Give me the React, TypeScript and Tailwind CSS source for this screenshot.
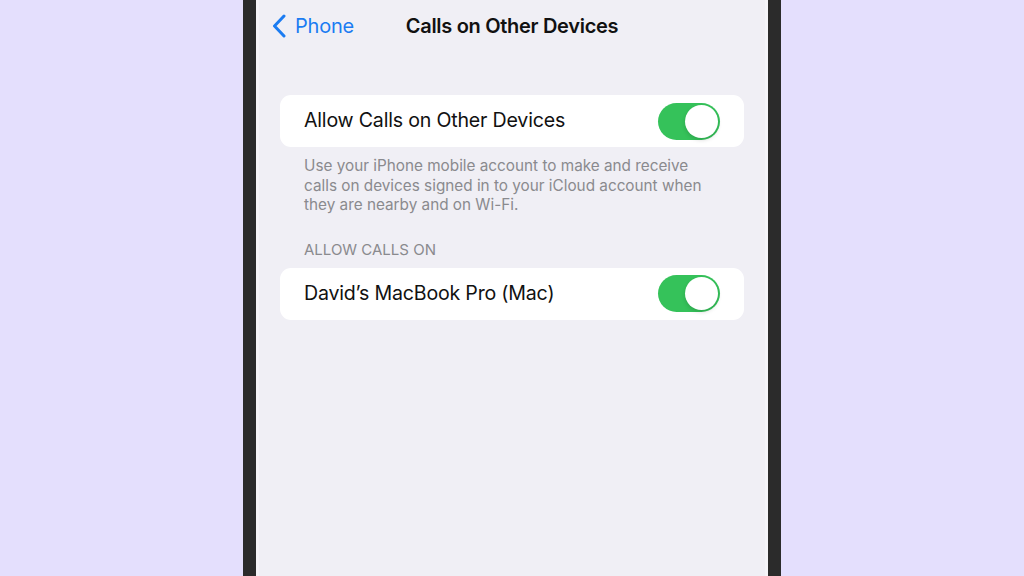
import React from "react";

function Toggle() {
  return (
    <div className="flex h-[37px] w-[62px] items-center justify-end rounded-full bg-[#35c25a] p-[2px]">
      <div className="h-[33px] w-[33px] rounded-full bg-white shadow-[0_2px_4px_rgba(0,0,0,0.15)]" />
    </div>
  );
}

function Row({ label }: { label: string }) {
  return (
    <div className="flex h-[52px] items-center justify-between rounded-[11px] bg-white pl-6 pr-6">
      <span className="text-[19.6px] tracking-[-0.2px] text-[#111]">{label}</span>
      <Toggle />
    </div>
  );
}

export default function App() {
  return (
    <div
      className="flex h-[576px] w-[1024px] justify-center overflow-hidden bg-[#e4dffd]"
      style={{ fontFamily: "Inter, 'Noto Sans', sans-serif" }}
    >
      <div className="flex w-[538px] border-x-[13px] border-[#2b2b2b] bg-[#f0eff5]">
        <div className="flex w-full flex-col border-x-[3px] border-[#f5f4f8]">
          {/* Nav bar */}
          <div className="relative flex h-[52px] items-center">
            <div className="flex items-center gap-[9px] pl-[13px] text-[#1b7cf2]">
              <svg width="14" height="24" viewBox="0 0 14 24" fill="none">
                <path d="M12 2 L2.5 12 L12 22" stroke="currentColor" strokeWidth="3" strokeLinecap="round" strokeLinejoin="round" />
              </svg>
              <span className="text-[20px] tracking-[-0.2px]">Phone</span>
            </div>
            <div className="absolute inset-x-0 top-0 flex h-[52px] items-center justify-center">
              <span className="text-[20px] font-semibold tracking-[-0.3px] text-[#111]">Calls on Other Devices</span>
            </div>
          </div>

          <div className="flex flex-col px-[21px] pt-[43px]">
            <Row label="Allow Calls on Other Devices" />
            <p className="pl-6 pr-[34px] pt-[9px] text-[15.3px] leading-[19.5px] text-[#8a8a8e]">
              Use your iPhone mobile account to make and receive calls on devices signed in to your iCloud account when they are nearby and on Wi-Fi.
            </p>
            <div className="px-6 pt-[25px] pb-[9px] text-[15px] uppercase leading-[19px] text-[#8a8a8e]">
              Allow Calls On
            </div>
            <Row label="David’s MacBook Pro (Mac)" />
          </div>
        </div>
      </div>
    </div>
  );
}
